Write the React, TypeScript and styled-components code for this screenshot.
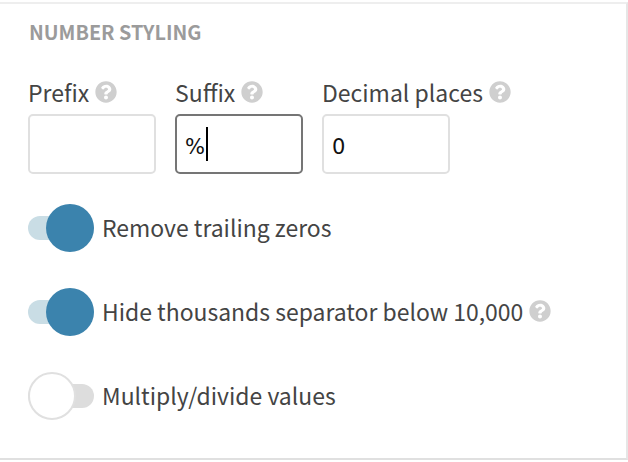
import styled, { createGlobalStyle } from "styled-components";
import { FaQuestionCircle } from "react-icons/fa";

const GlobalStyle = createGlobalStyle`
  html, body {
    margin: 0;
    padding: 0;
    background: #fff;
  }
`;

const Panel = styled.div`
  box-sizing: border-box;
  width: 628px;
  height: 458px;
  margin: 2px 0 0;
  padding: 0 0 0 28px;
  border-top: 2px solid #eeeeee;
  border-right: 2px solid #e6e6e6;
  border-bottom: 2px solid #e0e0e0;
  font-family: "Noto Sans CJK SC", "Source Sans Pro", "Noto Sans", sans-serif;
  color: #444444;
`;

const Heading = styled.div`
  height: 58px;
  padding: 17px 0 0 1px;
  box-sizing: border-box;
  font-size: 19.8px;
  line-height: 22px;
  font-weight: 700;
  color: #9b9b9b;
`;

const Fields = styled.div`
  display: flex;
  gap: 19.5px;
`;

const Field = styled.div`
  width: 127.5px;
  display: flex;
  flex-direction: column;
`;

const Label = styled.div`
  box-sizing: border-box;
  display: flex;
  align-items: center;
  gap: 6px;
  height: 52px;
  padding: 7px 0 0;
  white-space: nowrap;
  font-size: 23px;
  line-height: 32px;
`;

const Help = styled(FaQuestionCircle)`
  flex: none;
  width: 22px;
  height: 22px;
  color: #cfcfcf;
`;

const Input = styled.div<{ $focused?: boolean }>`
  box-sizing: border-box;
  height: 60px;
  display: flex;
  align-items: center;
  padding: 5px 8px 0;
  background: #fff;
  border: 2px solid ${(p) => (p.$focused ? "#757575" : "#e0e0e0")};
  border-radius: 5px;
  font-family: "DejaVu Sans", "Open Sans", sans-serif;
  font-size: 21px;
  color: #111;
`;

const Caret = styled.span`
  width: 2px;
  height: 34px;
  margin: -5px 0 0 1px;
  background: #000;
`;

const Toggles = styled.div`
  display: flex;
  flex-direction: column;
  gap: 36px;
  margin-top: 30px;
`;

const ToggleRow = styled.div`
  display: flex;
  align-items: center;
  gap: 8px;
  height: 48px;
  font-size: 22.95px;
  line-height: 32px;
  white-space: nowrap;
`;

const Track = styled.div<{ $on?: boolean }>`
  position: relative;
  flex: none;
  width: 66px;
  height: 24px;
  border-radius: 12px;
  background: ${(p) => (p.$on ? "#c9dde5" : "#dddddd")};
`;

const Knob = styled.div<{ $on?: boolean }>`
  position: absolute;
  box-sizing: border-box;
  top: -12px;
  left: ${(p) => (p.$on ? "18px" : "0")};
  width: 48px;
  height: 48px;
  border-radius: 50%;
  background: ${(p) => (p.$on ? "#3b83ad" : "#fff")};
  border: ${(p) => (p.$on ? "none" : "2px solid #e0e0e0")};
`;

const ToggleText = styled.span`
  display: flex;
  align-items: center;
  gap: 6px;
  padding-bottom: 2px;
`;

function Toggle({ on, children }: { on?: boolean; children: React.ReactNode }) {
  return (
    <ToggleRow>
      <Track $on={on}>
        <Knob $on={on} />
      </Track>
      <ToggleText>{children}</ToggleText>
    </ToggleRow>
  );
}

export default function App() {
  return (
    <>
      <GlobalStyle />
      <Panel>
        <Heading>NUMBER STYLING</Heading>
        <Fields>
          <Field>
            <Label>
              Prefix <Help />
            </Label>
            <Input />
          </Field>
          <Field>
            <Label>
              Suffix <Help />
            </Label>
            <Input $focused>
              %<Caret />
            </Input>
          </Field>
          <Field>
            <Label>
              Decimal places <Help />
            </Label>
            <Input>0</Input>
          </Field>
        </Fields>
        <Toggles>
          <Toggle on>Remove trailing zeros</Toggle>
          <Toggle on>
            Hide thousands separator below 10,000 <Help />
          </Toggle>
          <Toggle>Multiply/divide values</Toggle>
        </Toggles>
      </Panel>
    </>
  );
}
